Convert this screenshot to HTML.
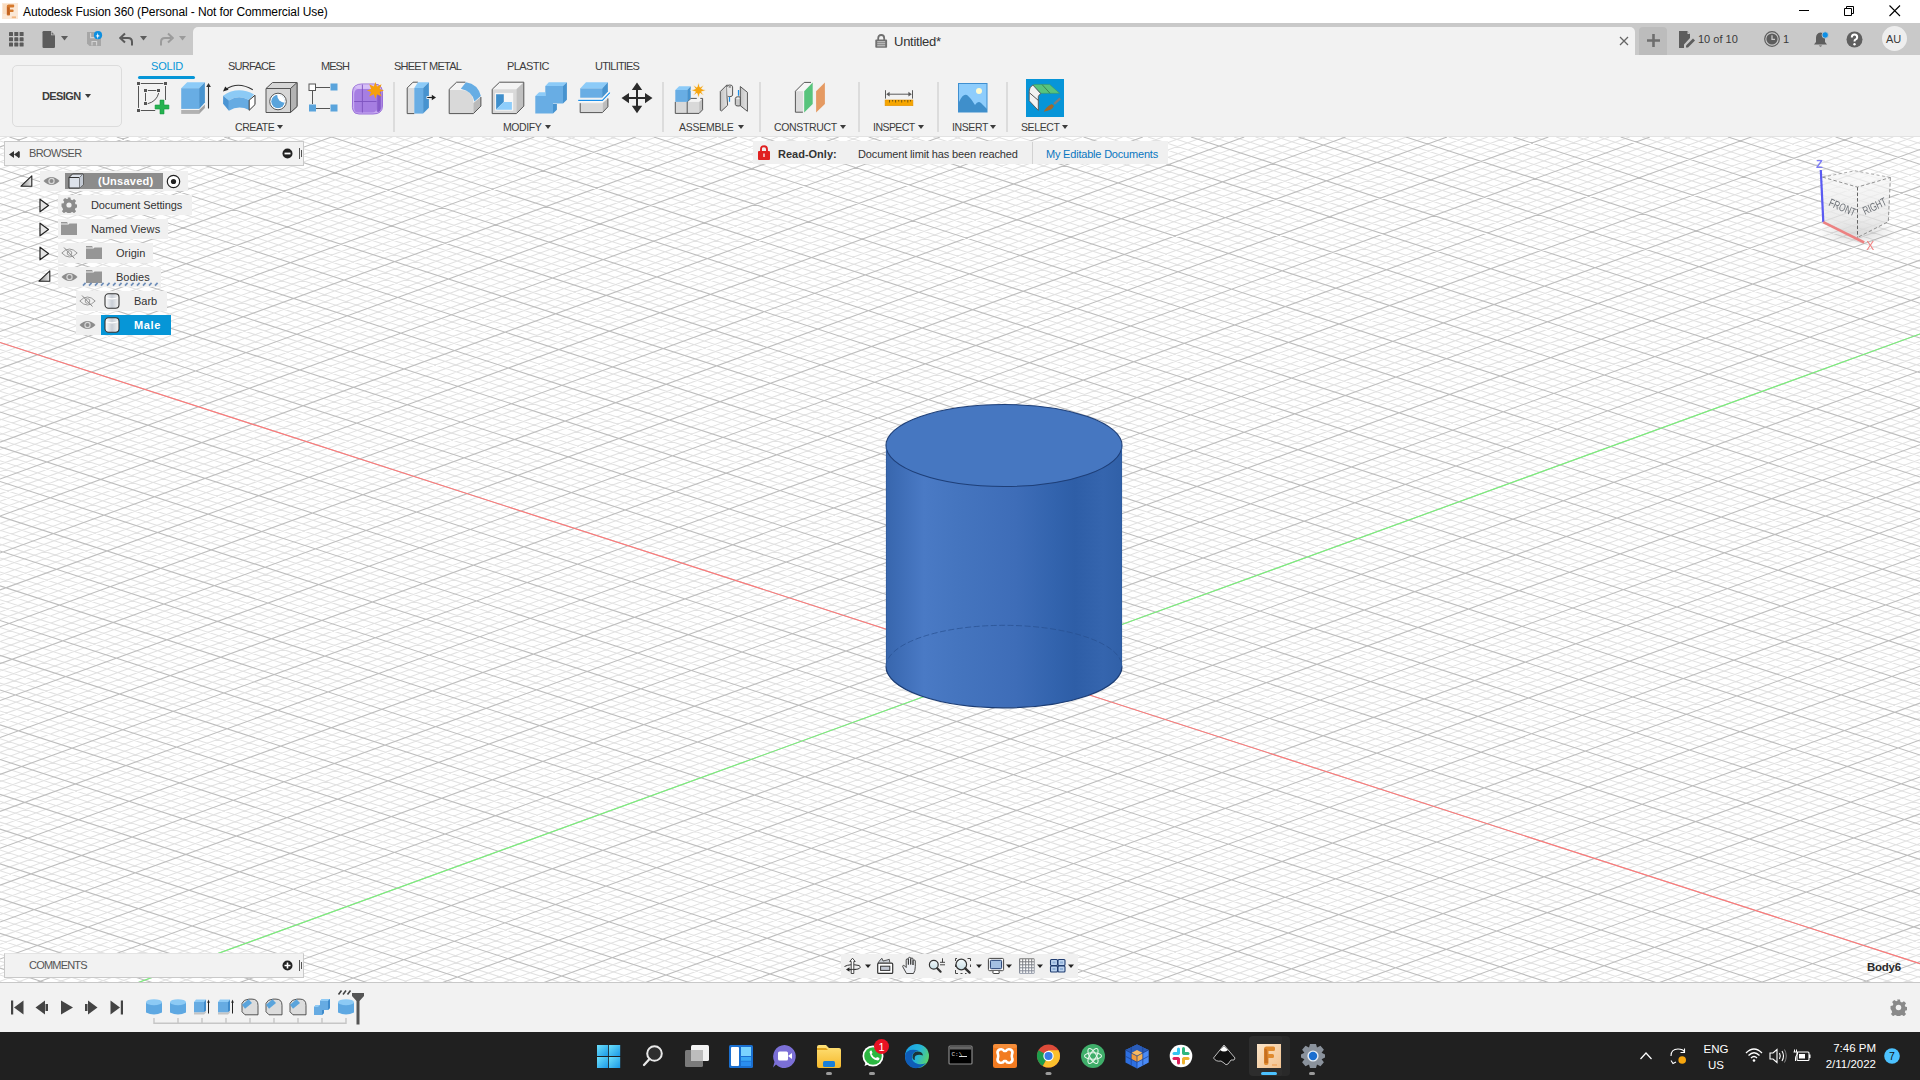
<!DOCTYPE html>
<html><head><meta charset="utf-8">
<style>
*{box-sizing:border-box;margin:0;padding:0}
html,body{width:1920px;height:1080px;overflow:hidden;background:#fff;font-family:"Liberation Sans",sans-serif;color:#3c3c3c}
.a{position:absolute}
#title{left:0;top:0;width:1920px;height:23px;background:#fff}
#tabbar{left:0;top:23px;width:1920px;height:32px;background:#c9c9c9}
#toolbar{left:0;top:55px;width:1920px;height:82px;background:#f2f2f2;border-bottom:1px solid #e3e3e3}
#vp{left:0;top:0;width:1920px;height:1080px}
#timeline{left:0;top:982px;width:1920px;height:50px;background:#f2f2f2}
#taskbar{left:0;top:1032px;width:1920px;height:48px;background:#202020}
.tl{font-size:11px;color:#3c3c3c;white-space:nowrap}
.lbl{font-size:10.5px;color:#3c3c3c;white-space:nowrap}
.sep{width:2px;background:#dcdcdc;top:82px;height:50px}
</style></head><body>
<svg id="vp" class="a" width="1920" height="1080" viewBox="0 0 1920 1080"><path d="M0.0 982.0L3.2 983.0M0.0 975.0L24.7 983.0M0.0 961.1L67.6 983.0M0.0 954.2L89.1 983.0M0.0 947.2L110.6 983.0M0.0 940.3L132.1 983.0M0.0 926.4L175.0 983.0M0.0 919.4L196.5 983.0M0.0 912.5L218.0 983.0M0.0 905.5L239.5 983.0M0.0 891.6L282.5 983.0M0.0 884.7L304.0 983.0M0.0 877.7L325.4 983.0M0.0 870.8L346.9 983.0M0.0 856.9L389.9 983.0M0.0 849.9L411.4 983.0M0.0 843.0L432.9 983.0M0.0 836.0L454.3 983.0M0.0 822.1L497.3 983.0M0.0 815.2L518.8 983.0M0.0 808.2L540.3 983.0M0.0 801.3L561.8 983.0M0.0 787.4L604.7 983.0M0.0 780.4L626.2 983.0M0.0 773.5L647.7 983.0M0.0 766.5L669.2 983.0M0.0 752.6L712.2 983.0M0.0 745.6L733.6 983.0M0.0 738.7L755.1 983.0M0.0 731.7L776.6 983.0M0.0 717.8L819.6 983.0M-0.0 710.9L841.1 983.0M0.0 703.9L862.6 983.0M0.0 697.0L884.0 983.0M0.0 683.1L927.0 983.0M0.0 676.1L948.5 983.0M0.0 669.2L970.0 983.0M0.0 662.2L991.5 983.0M0.0 648.3L1034.4 983.0M0.0 641.4L1055.9 983.0M0.0 634.4L1077.4 983.0M0.0 627.5L1098.9 983.0M0.0 613.6L1141.9 983.0M0.0 606.6L1163.3 983.0M0.0 599.7L1184.8 983.0M0.0 592.7L1206.3 983.0M0.0 578.8L1249.3 983.0M0.0 571.9L1270.8 983.0M0.0 564.9L1292.3 983.0M0.0 558.0L1313.7 983.0M0.0 544.1L1356.7 983.0M0.0 537.1L1378.2 983.0M0.0 530.2L1399.7 983.0M0.0 523.2L1421.2 983.0M0.0 509.3L1464.1 983.0M0.0 502.4L1485.6 983.0M0.0 495.4L1507.1 983.0M0.0 488.5L1528.6 983.0M0.0 474.6L1571.6 983.0M0.0 467.6L1593.0 983.0M0.0 460.7L1614.5 983.0M0.0 453.7L1636.0 983.0M0.0 439.8L1679.0 983.0M0.0 432.9L1700.5 983.0M0.0 425.9L1721.9 983.0M-0.0 419.0L1743.4 983.0M0.0 405.1L1786.4 983.0M0.0 398.1L1807.9 983.0M0.0 391.2L1829.4 983.0M0.0 384.2L1850.9 983.0M-0.0 370.3L1893.8 983.0M-0.0 363.4L1915.3 983.0M0.0 356.4L1920.0 977.6M0.0 349.5L1920.0 970.6M0.0 335.5L1920.0 956.7M0.0 328.6L1920.0 949.8M0.0 321.6L1920.0 942.8M0.0 314.7L1920.0 935.9M0.0 300.8L1920.0 922.0M0.0 293.8L1920.0 915.0M0.0 286.9L1920.0 908.1M0.0 279.9L1920.0 901.1M0.0 266.0L1920.0 887.2M0.0 259.1L1920.0 880.3M0.0 252.1L1920.0 873.3M0.0 245.2L1920.0 866.4M0.0 231.3L1920.0 852.5M0.0 224.3L1920.0 845.5M0.0 217.4L1920.0 838.6M0.0 210.4L1920.0 831.6M0.0 196.5L1920.0 817.7M0.0 189.6L1920.0 810.7M0.0 182.6L1920.0 803.8M0.0 175.7L1920.0 796.8M0.0 161.8L1920.0 782.9M0.0 154.8L1920.0 776.0M0.0 147.9L1920.0 769.0M0.0 140.9L1920.0 762.1M30.8 137.0L1920.0 748.2M52.3 137.0L1920.0 741.2M73.8 137.0L1920.0 734.3M95.3 137.0L1920.0 727.3M138.3 137.0L1920.0 713.4M159.7 137.0L1920.0 706.5M181.2 137.0L1920.0 699.5M202.7 137.0L1920.0 692.6M245.7 137.0L1920.0 678.7M267.2 137.0L1920.0 671.7M288.7 137.0L1920.0 664.8M310.1 137.0L1920.0 657.8M353.1 137.0L1920.0 643.9M374.6 137.0L1920.0 637.0M396.1 137.0L1920.0 630.0M417.6 137.0L1920.0 623.1M460.5 137.0L1920.0 609.2M482.0 137.0L1920.0 602.2M503.5 137.0L1920.0 595.3M525.0 137.0L1920.0 588.3M568.0 137.0L1920.0 574.4M589.4 137.0L1920.0 567.5M610.9 137.0L1920.0 560.5M632.4 137.0L1920.0 553.6M675.4 137.0L1920.0 539.7M696.9 137.0L1920.0 532.7M718.3 137.0L1920.0 525.8M739.8 137.0L1920.0 518.8M782.8 137.0L1920.0 504.9M804.3 137.0L1920.0 498.0M825.8 137.0L1920.0 491.0M847.3 137.0L1920.0 484.1M890.2 137.0L1920.0 470.2M911.7 137.0L1920.0 463.2M933.2 137.0L1920.0 456.3M954.7 137.0L1920.0 449.3M997.6 137.0L1920.0 435.4M1019.1 137.0L1920.0 428.5M1040.6 137.0L1920.0 421.5M1062.1 137.0L1920.0 414.6M1105.1 137.0L1920.0 400.6M1126.6 137.0L1920.0 393.7M1148.0 137.0L1920.0 386.7M1169.5 137.0L1920.0 379.8M1212.5 137.0L1920.0 365.9M1234.0 137.0L1920.0 358.9M1255.5 137.0L1920.0 352.0M1277.0 137.0L1920.0 345.0M1319.9 137.0L1920.0 331.1M1341.4 137.0L1920.0 324.2M1362.9 137.0L1920.0 317.2M1384.4 137.0L1920.0 310.3M1427.3 137.0L1920.0 296.4M1448.8 137.0L1920.0 289.4M1470.3 137.0L1920.0 282.5M1491.8 137.0L1920.0 275.5M1534.8 137.0L1920.0 261.6M1556.3 137.0L1920.0 254.7M1577.7 137.0L1920.0 247.7M1599.2 137.0L1920.0 240.8M1642.2 137.0L1920.0 226.9M1663.7 137.0L1920.0 219.9M1685.2 137.0L1920.0 213.0M1706.6 137.0L1920.0 206.0M1749.6 137.0L1920.0 192.1M1771.1 137.0L1920.0 185.2M1792.6 137.0L1920.0 178.2M1814.1 137.0L1920.0 171.3M1857.0 137.0L1920.0 157.4M1878.5 137.0L1920.0 150.4M1900.0 137.0L1920.0 143.5M0.0 139.5L7.0 137.0M0.0 154.3L47.6 137.0M0.0 161.7L67.8 137.0M0.0 169.1L88.1 137.0M0.0 176.5L108.4 137.0M0.0 191.2L149.0 137.0M0.0 198.6L169.2 137.0M0.0 206.0L189.5 137.0M0.0 213.4L209.8 137.0M0.0 228.1L250.4 137.0M0.0 235.5L270.7 137.0M0.0 242.9L290.9 137.0M0.0 250.3L311.2 137.0M0.0 265.0L351.8 137.0M0.0 272.4L372.1 137.0M0.0 279.8L392.4 137.0M0.0 287.2L412.6 137.0M0.0 302.0L453.2 137.0M0.0 309.3L473.5 137.0M0.0 316.7L493.8 137.0M0.0 324.1L514.0 137.0M0.0 338.9L554.6 137.0M0.0 346.3L574.9 137.0M0.0 353.6L595.2 137.0M0.0 361.0L615.5 137.0M0.0 375.8L656.0 137.0M0.0 383.2L676.3 137.0M0.0 390.6L696.6 137.0M0.0 397.9L716.9 137.0M0.0 412.7L757.4 137.0M0.0 420.1L777.7 137.0M0.0 427.5L798.0 137.0M0.0 434.8L818.3 137.0M0.0 449.6L858.8 137.0M0.0 457.0L879.1 137.0M0.0 464.4L899.4 137.0M0.0 471.8L919.7 137.0M0.0 486.5L960.2 137.0M0.0 493.9L980.5 137.0M0.0 501.3L1000.8 137.0M0.0 508.7L1021.1 137.0M0.0 523.4L1061.7 137.0M0.0 530.8L1081.9 137.0M0.0 538.2L1102.2 137.0M0.0 545.6L1122.5 137.0M0.0 560.4L1163.1 137.0M0.0 567.7L1183.4 137.0M0.0 575.1L1203.6 137.0M0.0 582.5L1223.9 137.0M0.0 597.3L1264.5 137.0M0.0 604.6L1284.8 137.0M0.0 612.0L1305.0 137.0M0.0 619.4L1325.3 137.0M0.0 634.2L1365.9 137.0M-0.0 641.6L1386.2 137.0M-0.0 648.9L1406.5 137.0M0.0 656.3L1426.7 137.0M0.0 671.1L1467.3 137.0M0.0 678.5L1487.6 137.0M0.0 685.9L1507.9 137.0M0.0 693.2L1528.1 137.0M0.0 708.0L1568.7 137.0M0.0 715.4L1589.0 137.0M0.0 722.8L1609.3 137.0M0.0 730.2L1629.6 137.0M0.0 744.9L1670.1 137.0M0.0 752.3L1690.4 137.0M0.0 759.7L1710.7 137.0M0.0 767.1L1731.0 137.0M0.0 781.8L1771.5 137.0M0.0 789.2L1791.8 137.0M0.0 796.6L1812.1 137.0M0.0 804.0L1832.4 137.0M0.0 818.7L1872.9 137.0M0.0 826.1L1893.2 137.0M0.0 833.5L1913.5 137.0M0.0 840.9L1920.0 142.0M0.0 855.7L1920.0 156.8M0.0 863.0L1920.0 164.2M0.0 870.4L1920.0 171.5M0.0 877.8L1920.0 178.9M0.0 892.6L1920.0 193.7M0.0 900.0L1920.0 201.1M-0.0 907.3L1920.0 208.5M-0.0 914.7L1920.0 215.8M0.0 929.5L1920.0 230.6M0.0 936.9L1920.0 238.0M0.0 944.2L1920.0 245.4M0.0 951.6L1920.0 252.8M0.0 966.4L1920.0 267.5M0.0 973.8L1920.0 274.9M0.0 981.2L1920.0 282.3M15.2 983.0L1920.0 289.7M55.8 983.0L1920.0 304.4M76.1 983.0L1920.0 311.8M96.4 983.0L1920.0 319.2M116.6 983.0L1920.0 326.6M157.2 983.0L1920.0 341.3M177.5 983.0L1920.0 348.7M197.8 983.0L1920.0 356.1M218.0 983.0L1920.0 363.5M258.6 983.0L1920.0 378.3M278.9 983.0L1920.0 385.6M299.2 983.0L1920.0 393.0M319.5 983.0L1920.0 400.4M360.0 983.0L1920.0 415.2M380.3 983.0L1920.0 422.6M400.6 983.0L1920.0 429.9M420.9 983.0L1920.0 437.3M461.4 983.0L1920.0 452.1M481.7 983.0L1920.0 459.5M502.0 983.0L1920.0 466.9M522.3 983.0L1920.0 474.2M562.8 983.0L1920.0 489.0M583.1 983.0L1920.0 496.4M603.4 983.0L1920.0 503.8M623.7 983.0L1920.0 511.1M664.3 983.0L1920.0 525.9M684.5 983.0L1920.0 533.3M704.8 983.0L1920.0 540.7M725.1 983.0L1920.0 548.1M765.7 983.0L1920.0 562.8M785.9 983.0L1920.0 570.2M806.2 983.0L1920.0 577.6M826.5 983.0L1920.0 585.0M867.1 983.0L1920.0 599.7M887.4 983.0L1920.0 607.1M907.6 983.0L1920.0 614.5M927.9 983.0L1920.0 621.9M968.5 983.0L1920.0 636.7M988.8 983.0L1920.0 644.0M1009.0 983.0L1920.0 651.4M1029.3 983.0L1920.0 658.8M1069.9 983.0L1920.0 673.6M1090.2 983.0L1920.0 680.9M1110.5 983.0L1920.0 688.3M1130.7 983.0L1920.0 695.7M1171.3 983.0L1920.0 710.5M1191.6 983.0L1920.0 717.9M1211.9 983.0L1920.0 725.2M1232.2 983.0L1920.0 732.6M1272.7 983.0L1920.0 747.4M1293.0 983.0L1920.0 754.8M1313.3 983.0L1920.0 762.2M1333.6 983.0L1920.0 769.5M1374.1 983.0L1920.0 784.3M1394.4 983.0L1920.0 791.7M1414.7 983.0L1920.0 799.1M1435.0 983.0L1920.0 806.5M1475.5 983.0L1920.0 821.2M1495.8 983.0L1920.0 828.6M1516.1 983.0L1920.0 836.0M1536.4 983.0L1920.0 843.4M1576.9 983.0L1920.0 858.1M1597.2 983.0L1920.0 865.5M1617.5 983.0L1920.0 872.9M1637.8 983.0L1920.0 880.3M1678.4 983.0L1920.0 895.0M1698.6 983.0L1920.0 902.4M1718.9 983.0L1920.0 909.8M1739.2 983.0L1920.0 917.2M1779.8 983.0L1920.0 932.0M1800.0 983.0L1920.0 939.3M1820.3 983.0L1920.0 946.7M1840.6 983.0L1920.0 954.1M1881.2 983.0L1920.0 968.9M1901.5 983.0L1920.0 976.3" stroke="#e2e2e2" stroke-width="1.05" fill="none"/><path d="M0.0 968.1L46.1 983.0M0.0 933.3L153.6 983.0M0.0 898.6L261.0 983.0M0.0 863.8L368.4 983.0M0.0 829.1L475.8 983.0M0.0 794.3L583.3 983.0M0.0 759.5L690.7 983.0M0.0 724.8L798.1 983.0M0.0 690.0L905.5 983.0M0.0 655.3L1012.9 983.0M0.0 620.5L1120.4 983.0M0.0 585.8L1227.8 983.0M0.0 551.0L1335.2 983.0M0.0 516.3L1442.6 983.0M0.0 481.5L1550.1 983.0M0.0 446.8L1657.5 983.0M0.0 412.0L1764.9 983.0M0.0 377.3L1872.3 983.0M0.0 342.5L1920.0 963.7M0.0 307.7L1920.0 928.9M0.0 273.0L1920.0 894.2M0.0 238.2L1920.0 859.4M0.0 203.5L1920.0 824.6M0.0 168.7L1920.0 789.9M9.4 137.0L1920.0 755.1M116.8 137.0L1920.0 720.4M224.2 137.0L1920.0 685.6M331.6 137.0L1920.0 650.9M439.0 137.0L1920.0 616.1M546.5 137.0L1920.0 581.4M653.9 137.0L1920.0 546.6M761.3 137.0L1920.0 511.9M868.7 137.0L1920.0 477.1M976.2 137.0L1920.0 442.4M1083.6 137.0L1920.0 407.6M1191.0 137.0L1920.0 372.8M1298.4 137.0L1920.0 338.1M1405.9 137.0L1920.0 303.3M1513.3 137.0L1920.0 268.6M1620.7 137.0L1920.0 233.8M1728.1 137.0L1920.0 199.1M1835.6 137.0L1920.0 164.3M0.0 146.9L27.3 137.0M0.0 183.8L128.7 137.0M0.0 220.8L230.1 137.0M0.0 257.7L331.5 137.0M0.0 294.6L432.9 137.0M0.0 331.5L534.3 137.0M0.0 368.4L635.7 137.0M0.0 405.3L737.1 137.0M0.0 442.2L838.6 137.0M0.0 479.1L940.0 137.0M0.0 516.1L1041.4 137.0M0.0 553.0L1142.8 137.0M0.0 589.9L1244.2 137.0M0.0 626.8L1345.6 137.0M0.0 663.7L1447.0 137.0M0.0 700.6L1548.4 137.0M0.0 737.5L1649.8 137.0M0.0 774.4L1751.2 137.0M0.0 811.4L1852.7 137.0M0.0 848.3L1920.0 149.4M0.0 885.2L1920.0 186.3M-0.0 922.1L1920.0 223.2M-0.0 959.0L1920.0 260.1M35.5 983.0L1920.0 297.1M136.9 983.0L1920.0 334.0M238.3 983.0L1920.0 370.9M339.7 983.0L1920.0 407.8M441.2 983.0L1920.0 444.7M542.6 983.0L1920.0 481.6M644.0 983.0L1920.0 518.5M745.4 983.0L1920.0 555.4M846.8 983.0L1920.0 592.4M948.2 983.0L1920.0 629.3M1049.6 983.0L1920.0 666.2M1151.0 983.0L1920.0 703.1M1252.4 983.0L1920.0 740.0M1353.8 983.0L1920.0 776.9M1455.3 983.0L1920.0 813.8M1556.7 983.0L1920.0 850.7M1658.1 983.0L1920.0 887.7M1759.5 983.0L1920.0 924.6M1860.9 983.0L1920.0 961.5" stroke="#bebebe" stroke-width="1.1" fill="none"/><path d="M0.0 342.5L1920.0 963.7" stroke="#ff7878" stroke-width="1.1" fill="none"/><path d="M136.9 983.0L1920.0 334.0" stroke="#78f078" stroke-width="1.1" fill="none"/></svg>

<div id="title" class="a">
 <svg class="a" style="left:2px;top:3px" width="16" height="16" viewBox="0 0 16 16">
  <rect width="16" height="16" fill="#fbe8d6"/><rect x="1" y="1" width="4" height="10" fill="#f9dcc0"/>
  <path d="M4.8 3.2Q4.8 1.6 6.4 1.6H11.4Q12.2 1.6 12.2 2.6V3.6Q12.2 4.4 11.4 4.4H8V6.6H10.8Q11.6 6.6 11.6 7.4V8.2Q11.6 9 10.8 9H8V11.8Q8 12.6 7.2 12.6H5.8Q4.8 12.6 4.8 11.8z" fill="#d5782c"/>
  <path d="M5.2 11.5V4Q6 3.5 7.2 5L7.8 11.5z" fill="#b4531a" opacity=".6"/>
  <rect x="9.8" y="13.4" width="4.2" height="1.8" fill="#f2b782"/>
 </svg>
 <div class="a" style="left:23px;top:4px;font-size:12px;line-height:16px;color:#000;letter-spacing:-0.1px">Autodesk Fusion 360 (Personal - Not for Commercial Use)</div>
 <div class="a" style="left:1799px;top:10px;width:10px;height:1px;background:#000"></div>
 <svg class="a" style="left:1843px;top:5px" width="12" height="12" viewBox="0 0 12 12"><path d="M1.5 3.5h7v7h-7z M3.5 3.5v-2h7v7h-2" fill="none" stroke="#000" stroke-width="1"/></svg>
 <svg class="a" style="left:1889px;top:5px" width="12" height="12" viewBox="0 0 12 12"><path d="M0.5 0.5L11 11M11 0.5L0.5 11" stroke="#000" stroke-width="1.1"/></svg>
</div>
<div id="tabbar" class="a">
 <svg class="a" style="left:9px;top:9px" width="15" height="15" viewBox="0 0 15 15" fill="#5a5a5a">
  <rect x="0" y="0" width="4" height="4" rx=".6"/><rect x="5.3" y="0" width="4" height="4" rx=".6"/><rect x="10.6" y="0" width="4" height="4" rx=".6"/>
  <rect x="0" y="5.3" width="4" height="4" rx=".6"/><rect x="5.3" y="5.3" width="4" height="4" rx=".6"/><rect x="10.6" y="5.3" width="4" height="4" rx=".6"/>
  <rect x="0" y="10.6" width="4" height="4" rx=".6"/><rect x="5.3" y="10.6" width="4" height="4" rx=".6"/><rect x="10.6" y="10.6" width="4" height="4" rx=".6"/>
 </svg>
 <svg class="a" style="left:42px;top:8px" width="14" height="17" viewBox="0 0 14 17"><path d="M0.5 1.2Q0.5 0 1.7 0H9L13 4.2V15.8Q13 17 11.8 17H1.7Q0.5 17 0.5 15.8z" fill="#5c5c5c"/><path d="M9 0V4.2H13" fill="#c9c9c9"/><path d="M9.6 1.2L12 3.6H9.6z" fill="#5c5c5c"/></svg>
 <svg class="a" style="left:61px;top:13px" width="8" height="5" viewBox="0 0 8 5"><path d="M0 0h7l-3.5 4.5z" fill="#5c5c5c"/></svg>
 <svg class="a" style="left:86px;top:8px" width="17" height="17" viewBox="0 0 17 17"><path d="M1 1H15V15H3.5L1 12.5z" fill="#a6a6a6"/><path d="M4.6 2V6.6H9" fill="none" stroke="#d4d4d4" stroke-width="1.1"/><path d="M6 14.5V10.5H10.6V14.5" fill="none" stroke="#d4d4d4" stroke-width="1.1"/><circle cx="12" cy="4.2" r="4.1" fill="#0d8fe0"/><path d="M11.7 1.8L12.3 4.3L14 5.1L12.3 5.6L11.7 8L11.1 5.6L9.5 5.1L11.1 4.3z" fill="#fff"/></svg>
 <svg class="a" style="left:119px;top:9px" width="15" height="14" viewBox="0 0 15 14"><path d="M13 13.5V10Q13 6 9 6H3" fill="none" stroke="#5a5a5a" stroke-width="2"/><path d="M6 1.5L1.2 6L6 10.5" fill="none" stroke="#5a5a5a" stroke-width="2"/></svg>
 <svg class="a" style="left:140px;top:13px" width="8" height="5" viewBox="0 0 8 5"><path d="M0 0h7l-3.5 4.5z" fill="#5c5c5c"/></svg>
 <svg class="a" style="left:159px;top:9px" width="15" height="14" viewBox="0 0 15 14"><path d="M2 13.5V10Q2 6 6 6H12" fill="none" stroke="#9b9b9b" stroke-width="2"/><path d="M9 1.5L13.8 6L9 10.5" fill="none" stroke="#9b9b9b" stroke-width="2"/></svg>
 <svg class="a" style="left:179px;top:13px" width="8" height="5" viewBox="0 0 8 5"><path d="M0 0h7l-3.5 4.5z" fill="#9b9b9b"/></svg>
 <div class="a" style="left:193px;top:4px;width:1442px;height:28px;background:#f2f2f2;border-radius:5px 5px 0 0"></div>
 <svg class="a" style="left:875px;top:11px" width="13" height="14" viewBox="0 0 13 14"><path d="M3.2 6.5V4.2Q3.2 1 6.2 1T9.2 4.2V6.5" fill="none" stroke="#707070" stroke-width="1.8"/><rect x="0.3" y="5.6" width="11.8" height="8.2" rx="0.8" fill="#707070"/><path d="M2.2 7.8h8M2.2 9.8h8M2.2 11.8h8" stroke="#f0f0f0" stroke-width="0.8"/></svg>
 <div class="a" style="left:894px;top:11px;font-size:13px;line-height:16px;color:#333;letter-spacing:-0.25px">Untitled*</div>
 <svg class="a" style="left:1619px;top:13px" width="10" height="10" viewBox="0 0 10 10"><path d="M1 1L9 9M9 1L1 9" stroke="#666" stroke-width="1.3"/></svg>
 <div class="a" style="left:1639px;top:4px;width:28px;height:28px;background:#bcbcbc;border-radius:4px 4px 0 0"></div>
 <svg class="a" style="left:1647px;top:11px" width="13" height="13" viewBox="0 0 13 13"><path d="M6.5 0V13M0 6.5H13" stroke="#6e6e6e" stroke-width="2.6"/></svg>
 <svg class="a" style="left:1679px;top:8px" width="16" height="17" viewBox="0 0 16 17"><path d="M0 0H8.5L11 3V7L5 13.5V17H0z" fill="#5d5d5d"/><path d="M7 14.5L14 7.5L16 9.5L9 16.5H7z" fill="#5d5d5d"/><path d="M8.5 0V3H11" fill="#c9c9c9"/></svg>
 <div class="a" style="left:1698px;top:9px;font-size:11px;line-height:14px;color:#3a3a3a">10 of 10</div>
 <svg class="a" style="left:1764px;top:8px" width="16" height="16" viewBox="0 0 16 16"><circle cx="8" cy="8" r="7.3" fill="none" stroke="#5d5d5d" stroke-width="1.2"/><circle cx="8" cy="8" r="5.6" fill="#5d5d5d"/><path d="M8 4.2V8.3H11" fill="none" stroke="#c9c9c9" stroke-width="1.3"/></svg>
 <div class="a" style="left:1783px;top:9px;font-size:11px;line-height:14px;color:#3a3a3a">1</div>
 <svg class="a" style="left:1813px;top:8px" width="16" height="17" viewBox="0 0 16 17"><path d="M7.5 1.5Q3 2 3 7V11L1 13.5H14L12 11V7Q12 2 7.5 1.5z" fill="#5d5d5d"/><path d="M5.8 14.5Q7.5 16.8 9.2 14.5z" fill="#5d5d5d"/><circle cx="12.2" cy="4" r="3.2" fill="#0c8fe6" stroke="#c9c9c9" stroke-width="0.8"/></svg>
 <svg class="a" style="left:1846px;top:8px" width="17" height="17" viewBox="0 0 17 17"><circle cx="8.5" cy="8.5" r="8" fill="#5f5f5f"/><path d="M5.8 6.4Q5.8 3.6 8.5 3.6T11.2 6.2Q11.2 7.8 9.4 8.7Q8.5 9.2 8.5 10.4" fill="none" stroke="#fff" stroke-width="2"/><circle cx="8.5" cy="13.2" r="1.2" fill="#fff"/></svg>
 <div class="a" style="left:1882px;top:3px;width:25px;height:25px;border-radius:50%;background:#eeeeee"></div>
 <div class="a" style="left:1886px;top:8.5px;font-size:11px;line-height:14px;color:#3a3a3a">AU</div>
</div>
<div id="toolbar" class="a"></div>
<div class="a" style="left:11.5px;top:65px;width:110px;height:62px;border:1.5px solid #dcdcdc;border-radius:5px;background:#f2f2f2"></div>
<div class="a" style="left:42px;top:89px;font-size:11px;line-height:14px;font-weight:bold;color:#3c3c3c;letter-spacing:-0.6px">DESIGN</div>
<svg class="a" style="left:85px;top:94px" width="6" height="4" viewBox="0 0 6 4"><path d="M0 0h6L3 4z" fill="#3c3c3c"/></svg>
<div class="a tl" style="left:151px;top:60px;color:#0696d7;letter-spacing:-0.2px">SOLID</div>
<div class="a tl" style="left:228px;top:60px;letter-spacing:-0.72px">SURFACE</div>
<div class="a tl" style="left:321px;top:60px;letter-spacing:-0.95px">MESH</div>
<div class="a tl" style="left:394px;top:60px;letter-spacing:-0.75px">SHEET METAL</div>
<div class="a tl" style="left:507px;top:60px;letter-spacing:-0.58px">PLASTIC</div>
<div class="a tl" style="left:595px;top:60px;letter-spacing:-0.8px">UTILITIES</div>
<div class="a" style="left:138px;top:76px;width:57px;height:3px;background:#0696d7;border-radius:1.5px"></div>
<div class="a sep" style="left:393px"></div>
<div class="a sep" style="left:662px"></div>
<div class="a sep" style="left:759px"></div>
<div class="a sep" style="left:858px"></div>
<div class="a sep" style="left:937px"></div>
<div class="a sep" style="left:1006px"></div>
<div class="a lbl" style="left:235px;top:121px;letter-spacing:-0.42px">CREATE</div><svg class="a" style="left:277px;top:125px" width="6" height="4"><path d="M0 0h6L3 4z" fill="#3c3c3c"/></svg>
<div class="a lbl" style="left:503px;top:121px;letter-spacing:-0.4px">MODIFY</div><svg class="a" style="left:545px;top:125px" width="6" height="4"><path d="M0 0h6L3 4z" fill="#3c3c3c"/></svg>
<div class="a lbl" style="left:679px;top:121px;letter-spacing:-0.26px">ASSEMBLE</div><svg class="a" style="left:738px;top:125px" width="6" height="4"><path d="M0 0h6L3 4z" fill="#3c3c3c"/></svg>
<div class="a lbl" style="left:774px;top:121px;letter-spacing:-0.35px">CONSTRUCT</div><svg class="a" style="left:840px;top:125px" width="6" height="4"><path d="M0 0h6L3 4z" fill="#3c3c3c"/></svg>
<div class="a lbl" style="left:873px;top:121px;letter-spacing:-0.54px">INSPECT</div><svg class="a" style="left:918px;top:125px" width="6" height="4"><path d="M0 0h6L3 4z" fill="#3c3c3c"/></svg>
<div class="a lbl" style="left:952px;top:121px;letter-spacing:-0.38px">INSERT</div><svg class="a" style="left:990px;top:125px" width="6" height="4"><path d="M0 0h6L3 4z" fill="#3c3c3c"/></svg>
<div class="a lbl" style="left:1021px;top:121px;letter-spacing:-0.38px">SELECT</div><svg class="a" style="left:1062px;top:125px" width="6" height="4"><path d="M0 0h6L3 4z" fill="#3c3c3c"/></svg>
<!-- sketch -->
<svg class="a" style="left:136px;top:81px" width="34" height="34" viewBox="0 0 34 34">
 <g fill="#555"><rect x="1" y="1" width="3" height="3"/><rect x="28" y="1" width="3" height="3"/><rect x="1" y="28" width="3" height="3"/>
 <rect x="8" y="8" width="3" height="3"/><rect x="21" y="8" width="3" height="3"/><rect x="8" y="21" width="3" height="3"/></g>
 <path d="M5.2 2.5H26.9M2.5 5.4V26.5M29.5 5.4V18.6M5.2 29.5H18.8M12.3 9.5H19.8M9.5 12.3V19.7" stroke="#555" stroke-width="1" stroke-linecap="round"/>
 <path d="M12.1 22.6Q20.5 20.5 22.6 12.4" fill="none" stroke="#555" stroke-width="1" stroke-linecap="round"/>
 <path d="M24 19.1H28V24H32.9V28H28V32.9H24V28H19.1V24H24z" fill="#26b350" stroke="#10983c" stroke-width="0.6"/>
</svg>
<!-- extrude -->
<svg class="a" style="left:180px;top:81px" width="34" height="34" viewBox="0 0 34 34">
 <path d="M1.2 29H19.1V32.9H1.2z" fill="#b2b2b2"/><path d="M19.1 29L24.9 23.4V26.9L19.1 32.9z" fill="#a2a2a2"/>
 <path d="M1.2 7.2L7.2 1.2H24.9L19.1 7.2z" fill="#8ccbf8"/><path d="M1.2 7.2H19.1V27.9H1.2z" fill="#68ade4"/><path d="M19.1 7.2L24.9 1.2V21.6L19.1 27.9z" fill="#4793cf"/>
 <path d="M28.5 26.9V4.5" stroke="#333" stroke-width="1.1" stroke-linecap="round"/><path d="M26.2 6L28.5 1.9L30.9 6z" fill="#333"/>
</svg>
<!-- revolve -->
<svg class="a" style="left:222px;top:81px" width="34" height="34" viewBox="0 0 34 34">
 <path d="M4 8.3Q16 0 30.8 8.8" fill="none" stroke="#333" stroke-width="1.1"/><path d="M1 10.5L3.2 5.6L6.6 8.8z" fill="#222"/>
 <path d="M1.1 14.7Q15.7 4.5 32.1 13.4L27 19.1Q16.6 13.2 6.9 19.6z" fill="#8ccaf5"/>
 <path d="M6.9 19.6Q16.6 13.2 27 19.1V28.9Q16.6 23.5 6.9 29.8z" fill="#66abe2"/>
 <path d="M1.1 14.7L6.9 19.6V29.8L1.1 22.7z" fill="#4a95d4"/>
 <path d="M27.2 19.1L33 14.3V23.6L27.2 29.3z" fill="#fff" stroke="#333" stroke-width="1"/>
</svg>
<!-- hole -->
<svg class="a" style="left:265px;top:81px" width="34" height="34" viewBox="0 0 34 34">
 <path d="M1 7.5L7.5 1.5H32V25.5L25.5 31.5H1z" fill="#d6d6d6" stroke="#555" stroke-width="1"/>
 <path d="M25.5 7.5L32 1.5V25.5L25.5 31.5z" fill="#b3b3b3" stroke="#555" stroke-width="1"/><path d="M1 7.5H25.5V31.5" fill="none" stroke="#555" stroke-width="1"/>
 <circle cx="13" cy="20.5" r="8.3" fill="#fff" stroke="#555" stroke-width="1"/>
 <clipPath id="hc"><circle cx="13" cy="20.5" r="6.8"/></clipPath>
 <g clip-path="url(#hc)"><circle cx="13" cy="20.5" r="7" fill="#5aa4dc"/><circle cx="19.5" cy="14.5" r="7.2" fill="#fff"/></g>
</svg>
<!-- pattern -->
<svg class="a" style="left:308px;top:81px" width="32" height="34" viewBox="0 0 32 34">
 <path d="M8 6.5H22M4.5 10V23M8 27.5H22" stroke="#555" stroke-width="1"/>
 <rect x="1" y="3" width="6.5" height="6.5" fill="#fff" stroke="#555" stroke-width="1"/>
 <rect x="22.5" y="2.5" width="7" height="7" fill="#5aa4dc"/><rect x="1" y="23.5" width="7" height="7" fill="#5aa4dc"/><rect x="22.5" y="23.5" width="7" height="7" fill="#5aa4dc"/>
</svg>
<!-- form -->
<svg class="a" style="left:350px;top:81px" width="34" height="34" viewBox="0 0 34 34">
 <path d="M2.5 12Q2.5 6 6 4.5Q8 3 12 3H24Q29 3 31 6Q32.5 8 32.5 13V25Q32.5 29 30 31Q28 33 23 33H9Q4 33 3 29Q2 27 2.5 22z" fill="#c9aef2" stroke="#9a70d8" stroke-width="1"/>
 <path d="M4.2 13Q4.5 8.5 8 8H22Q26 8 26.5 12V27Q26.5 31.5 22 31.5H8Q4.2 31.5 4.2 27z" fill="#a67ee2"/>
 <path d="M26.5 12Q27 9 30 8Q31.5 10 31.5 14V25Q31.5 29 28.5 31Q26.5 31.5 26.5 29z" fill="#8d62cf"/>
 <path d="M5 5.5Q8 3.5 12 3.5H24Q27.5 3.5 29.5 6Q27 7.5 24 7.8H8Q5.5 7.8 5 5.5z" fill="#d6bff7"/>
 <path d="M12.4 8V31.5M4.2 20.5H26.5M12.4 3.5V8M29 9V30" stroke="#7d52bf" stroke-width="0.9" fill="none"/>
 <path d="M25.4 1L27 5.6L31.6 3.2L29.6 7.9L34 9.4L29.6 10.9L31.6 15.6L27 13.2L25.4 17.8L23.8 13.2L19.2 15.6L21.2 10.9L16.8 9.4L21.2 7.9L19.2 3.2L23.8 5.6z" fill="#f5a00c"/>
</svg>
<!-- press pull -->
<svg class="a" style="left:406px;top:81px" width="34" height="34" viewBox="0 0 34 34">
 <path d="M1.2 7L7 1.2H11.9L8.3 7z" fill="#f6f6f6"/><path d="M1.2 7H8.3V32.6H1.2z" fill="#dcdcdc"/>
 <path d="M8.3 32.6H1.2V7L7 1.2H11.9" fill="none" stroke="#555" stroke-width="1"/>
 <path d="M8.3 7L11.9 1.2H22.9L17.1 7z" fill="#8ccbf8"/><path d="M8.3 7H17.1V32.6H8.3z" fill="#68ade4"/><path d="M17.1 7L22.9 1.2V26.7L17.1 32.6z" fill="#4793cf"/>
 <rect x="20.6" y="15" width="3" height="3" fill="#fff"/>
 <path d="M21.2 16.5H27" stroke="#222" stroke-width="1.2"/><path d="M25.8 13.8L30 16.5L25.8 19.2z" fill="#222"/>
</svg>
<!-- fillet -->
<svg class="a" style="left:448px;top:81px" width="34" height="34" viewBox="0 0 34 34">
 <path d="M1.2 8.3L8.6 1.2H18Q30 3 32.9 15.1V25.1L25.4 32.6H1.2z" fill="#f4f4f4"/>
 <path d="M1.2 9H12.8Q25.4 9.5 25.4 21.9V32.6H1.2z" fill="#d9d9d9"/>
 <path d="M25.4 21.9L32.9 16.1V25.1L25.4 32.6z" fill="#b9b9b9"/>
 <path d="M18 1.2Q30 3 32.9 15.1L26.4 20.6Q24.5 10 12.8 7.7z" fill="#66ade4"/>
 <path d="M25.4 32.6H1.2V8.3L8.6 1.2H17.4M32.9 16V25.1L25.4 32.6" fill="none" stroke="#555" stroke-width="1"/>
</svg>
<!-- shell -->
<svg class="a" style="left:491px;top:81px" width="34" height="34" viewBox="0 0 34 34">
 <path d="M1.2 8.3L8.6 1.2H32.8L25.4 8.3z" fill="#f4f4f4"/><path d="M1.2 8.3H25.4V32.6H1.2z" fill="#d9d9d9"/><path d="M25.4 8.3L32.8 1.2V25.1L25.4 32.6z" fill="#c0c0c0"/>
 <path d="M1.2 32.6V8.3L8.6 1.2H32.8V25.1L25.4 32.6z" fill="none" stroke="#555" stroke-width="1"/>
 <rect x="4.1" y="11.9" width="18.1" height="17.8" fill="#f6f6f6"/>
 <path d="M5.1 13.2H12.8V20.9L5.1 28.4z" fill="#3f8fcc"/><path d="M5.1 28.4L12.8 20.9H20.9V28.7H5.1z" fill="#8ecdfb"/>
</svg>
<!-- combine -->
<svg class="a" style="left:534px;top:81px" width="34" height="34" viewBox="0 0 34 34">
 <path d="M1.3 15.1H11.3V5.1H29V22.5H19V32.6H1.3z" fill="#68ade4"/>
 <path d="M1.3 15.1L5.1 11.2H11.3V15.1z M11.3 5.1L14.8 1.2H32.9L29 5.1z" fill="#8ccbf8"/>
 <path d="M29 5.1L32.9 1.2V18.7L29 22.5z M19 22.9H22.9V28.7L19 32.6z" fill="#4793cf"/>
</svg>
<!-- split -->
<svg class="a" style="left:577px;top:81px" width="34" height="34" viewBox="0 0 34 34">
 <path d="M3.2 7.4L9 1.2H30.9L25.1 7.4z" fill="#8ccbf8"/><path d="M3.2 7.4H25.1V16.7H3.2z" fill="#68ade4"/><path d="M25.1 7.4L30.9 1.2V10.6L25.1 16.7z" fill="#4793cf"/>
 <path d="M25.4 22.2L30.9 17.4V25.8L25.4 31.6z" fill="#bdbdbd"/><path d="M3.2 22.2H25.4V31.6H3.2z" fill="#d9d9d9"/>
 <path d="M3.2 22.2V31.6H25.4L30.9 25.8V17.4" fill="none" stroke="#555" stroke-width="1"/>
 <path d="M1.2 19.3H25.4L32.9 11.6" fill="none" stroke="#fff" stroke-width="2.6"/>
 <path d="M1.2 19.3H25.4L32.9 11.6" fill="none" stroke="#1a8ee8" stroke-width="1.2"/>
</svg>
<!-- move -->
<svg class="a" style="left:620px;top:81px" width="34" height="34" viewBox="0 0 34 34">
 <path d="M17 8V26M8 17.1H26" stroke="#2b2b2b" stroke-width="2"/>
 <path d="M17 1.6L22.2 9H11.8z M17 32.2L22.2 24.8H11.8z M1.5 17.1L9 11.9V22.3z M32.5 17.1L25 11.9V22.3z" fill="#2b2b2b"/>
</svg>
<!-- new component -->
<svg class="a" style="left:674px;top:81px" width="34" height="34" viewBox="0 0 34 34">
 <path d="M13.2 20.9L17 17.4H28.6L25.1 20.9z" fill="#f4f4f4"/>
 <path d="M1.3 20.9H25.1V32.4H1.3z" fill="#d9d9d9"/><path d="M25.1 20.9L28.6 17.4V28.8L25.1 32.4z" fill="#c2c2c2"/>
 <path d="M1.3 20.9V32.4H25.1L28.6 28.8V17.4H26.3M22.8 17.4H17L13.2 20.9M13.2 20.9V32.4" fill="none" stroke="#555" stroke-width="1"/>
 <path d="M1.3 9L5.1 5.3H16.75L13.2 9z" fill="#8ccbf8"/><path d="M1.3 9H13.2V20.9H1.3z" fill="#68ade4"/><path d="M13.2 9L16.75 5.3V17L13.2 20.9z" fill="#4793cf"/>
 <path d="M24.5 1.3L26 6.2L30.1 3.65L27.55 7.75L32.4 9.25L27.55 10.75L30.1 14.85L26 12.3L24.5 17.2L23 12.3L18.9 14.85L21.45 10.75L16.6 9.25L21.45 7.75L18.9 3.65L23 6.2z" fill="#f6a50e" stroke="#f2f2f2" stroke-width="0.8"/>
</svg>
<!-- joint -->
<svg class="a" style="left:719px;top:82px" width="32" height="34" viewBox="0 0 32 34">
 <defs><linearGradient id="jg" x1="0" y1="0" x2="1" y2="0"><stop offset="0" stop-color="#c4c4c4"/><stop offset="1" stop-color="#e4e4e4"/></linearGradient></defs>
 <path d="M1.3 9.5L8 2.8V14.5L8.6 23.25L2.6 28.9L1.3 28.25z" fill="url(#jg)" stroke="#555" stroke-width="1" stroke-linejoin="round"/>
 <path d="M8 4.8Q8 3 10.8 3T13.6 4.8V13Q13.6 14.6 10.8 14.6Q9.6 14.6 8.6 14.2" fill="#e6e6e6" stroke="#555" stroke-width="1"/>
 <ellipse cx="10.8" cy="4.9" rx="1.3" ry="0.6" fill="#666"/>
 <path d="M21.3 4.5L28.4 10.3V29.3L21.3 23.7z" fill="url(#jg)" stroke="#555" stroke-width="1" stroke-linejoin="round"/>
 <path d="M16.3 16.4Q16.3 14.8 19 14.8Q20.5 14.8 21.3 15.2V23.7Q20 24 19 24Q16.3 24 16.3 22.4z" fill="#cacaca" stroke="#555" stroke-width="1"/>
 <ellipse cx="19" cy="16.4" rx="1.6" ry="0.8" fill="#f0f0f0"/>
 <path d="M10.5 15V19.7M19.5 8V13.7" stroke="#1a8ee8" stroke-width="1.2"/>
</svg>
<!-- construct -->
<svg class="a" style="left:794px;top:81px" width="34" height="34" viewBox="0 0 34 34">
 <path d="M1.4 10.2L10.2 1.4H18.7L10.2 10.2z" fill="#f6f6f6"/>
 <rect x="1.9" y="10.2" width="7" height="20.6" fill="#dcdcdc"/>
 <path d="M8.9 31.2H1.4V10.2L10.2 1.4H17" fill="none" stroke="#555" stroke-width="1"/>
 <path d="M10.2 10.2L18.7 1.4V23L10.2 31.5z" fill="#58c47c"/>
 <path d="M22.1 10.2L30.9 1.4V23L22.1 31.5z" fill="#e59a62"/>
</svg>
<!-- inspect -->
<svg class="a" style="left:883px;top:89px" width="32" height="19" viewBox="0 0 32 19">
 <path d="M2.5 1.2V9.6M29.5 1.2V9.6" stroke="#5a5a5a" stroke-width="1"/>
 <path d="M5 5.2H27" stroke="#5a5a5a" stroke-width="1"/>
 <path d="M3.2 5.2L6.6 2.8V7.6z M28.8 5.2L25.4 2.8V7.6z" fill="#5a5a5a"/>
 <rect x="2.1" y="11" width="27.8" height="5.7" fill="#f6a600" stroke="#e39200" stroke-width="0.6"/>
 <path d="M6.5 11V13.5M9.6 11V12.5M12.6 11V13.5M15.7 11V12.5M18.7 11V13.5M21.8 11V12.5M24.8 11V13.5M27.5 11V12.5" stroke="#6a5010" stroke-width="0.9"/>
</svg>
<!-- insert -->
<svg class="a" style="left:958px;top:83px" width="30" height="30" viewBox="0 0 30 30">
 <rect x="0.5" y="0.5" width="28.5" height="28.5" fill="#8ecdfc" stroke="#3f8fd0" stroke-width="1"/>
 <path d="M1 19Q5 10 9 12Q12 14 17 22Q20 17 23 20L29 26V29H1z" fill="#3f8fcb"/>
 <circle cx="21" cy="8" r="3" fill="#fffbd0"/>
</svg>
<!-- select -->
<svg class="a" style="left:1026px;top:79px" width="38" height="38" viewBox="0 0 38 38">
 <rect width="38" height="38" fill="#0795d8"/>
 <path d="M6.9 6Q8 5.4 10 5.4H23.6L33.6 14.3H14.8z" fill="#58c47d" stroke="#3f9a5c" stroke-width="0.6"/>
 <path d="M16.1 5.6L24 14.3" stroke="#3a7a50" stroke-width="0.9"/>
 <path d="M6.9 6Q3.2 8 3.2 12V21.8L12.3 31.4V17.7Q12.8 15.6 14.8 14.75z" fill="#f2f2f2" stroke="#555" stroke-width="0.9" stroke-linejoin="round"/>
 <path d="M3.6 13.9L12.3 21.4" stroke="#444" stroke-width="0.9"/>
 <path d="M28.2 24.8L34.2 19.3" stroke="#7d7d7d" stroke-width="2.4"/>
 <path d="M17.7 32.7Q20 28 25.2 25.2Q27.5 25 27.9 27.3Q26 31.5 17.7 32.7z" fill="#a2682a"/>
</svg>
<!-- browser -->
<div class="a" style="left:4px;top:141px;width:300px;height:25px;background:#f2f2f2;border:1px solid #c9c9c9"></div>
<svg class="a" style="left:9px;top:151px" width="11" height="7" viewBox="0 0 11 7"><path d="M0 3.5L5 0V7z M5 3.5L10 0V7z" fill="#333"/><rect x="9" y="0.5" width="1.8" height="6" fill="#333"/></svg>
<div class="a tl" style="left:29px;top:147px;color:#555;letter-spacing:-0.6px">BROWSER</div>
<svg class="a" style="left:282px;top:148px" width="11" height="11" viewBox="0 0 11 11"><circle cx="5.5" cy="5.5" r="5" fill="#222"/><rect x="2.5" y="4.6" width="6" height="1.8" fill="#fff"/></svg>
<div class="a" style="left:299px;top:148px;width:1px;height:11px;background:#555"></div><div class="a" style="left:301px;top:150px;width:1px;height:7px;background:#555"></div>

<div class="a" style="left:40px;top:171px;width:148px;height:20px;background:#f0f0f0"></div>
<div class="a" style="left:65px;top:173px;width:98px;height:16px;background:#8c8c8c"></div>
<svg class="a" style="left:20px;top:175px" width="13" height="12" viewBox="0 0 13 12"><defs><linearGradient id="tg" x1="0" y1="0" x2="1" y2="0"><stop offset="0" stop-color="#888"/><stop offset="1" stop-color="#eee"/></linearGradient></defs><path d="M1 11.2L11.8 0.8V11.2z" fill="url(#tg)" stroke="#222" stroke-width="1.1" stroke-linejoin="round"/></svg>
<svg class="a" style="left:43px;top:176px" width="17" height="10" viewBox="0 0 17 10"><path d="M0.5 5Q8.5 -3 16.5 5Q8.5 13 0.5 5z" fill="#8c8c8c"/><circle cx="8.5" cy="5" r="2.6" fill="none" stroke="#d8d8d8" stroke-width="1.2"/></svg>
<svg class="a" style="left:68px;top:173px" width="16" height="16" viewBox="0 0 16 16"><path d="M1 4.5L4.5 1H15V11.5L11.5 15H1z" fill="#dde2ea" stroke="#333" stroke-width="1"/><path d="M1 4.5H11.5V15M11.5 4.5L15 1" fill="none" stroke="#333" stroke-width="1"/><path d="M11.5 4.5L15 1V11.5L11.5 15z" fill="#c4cad4"/></svg>
<div class="a" style="left:98px;top:174px;font-size:11px;line-height:14px;font-weight:bold;color:#fff;letter-spacing:0.25px">(Unsaved)</div>
<svg class="a" style="left:166px;top:174px" width="15" height="15" viewBox="0 0 15 15"><circle cx="7.5" cy="7.5" r="6.2" fill="#fff" stroke="#222" stroke-width="1.2"/><circle cx="7.5" cy="7.5" r="2.6" fill="#222"/></svg>

<div class="a" style="left:58px;top:195px;width:134px;height:20px;background:#f0f0f0"></div>
<svg class="a" style="left:39px;top:198px" width="11" height="15" viewBox="0 0 11 15"><path d="M1 1.2L9.5 7.5L1 13.8z" fill="#e6e6e6" stroke="#222" stroke-width="1.2" stroke-linejoin="round"/></svg>
<svg class="a" style="left:61px;top:197px" width="16" height="16" viewBox="0 0 16 16"><path d="M6.6 0.5h2.8l.4 2.1 1.5.6 1.8-1.2 2 2-1.2 1.8.6 1.5 2.1.4v2.8l-2.1.4-.6 1.5 1.2 1.8-2 2-1.8-1.2-1.5.6-.4 2.1H6.6l-.4-2.1-1.5-.6-1.8 1.2-2-2 1.2-1.8-.6-1.5L.5 9.4V6.6l2.1-.4.6-1.5L2 2.9l2-2 1.8 1.2 1.5-.6z" fill="#8c8c8c"/><circle cx="8" cy="8" r="2.6" fill="#f0f0f0"/></svg>
<div class="a" style="left:91px;top:198px;font-size:11px;line-height:14px;color:#333;letter-spacing:-0.11px">Document Settings</div>

<div class="a" style="left:58px;top:219px;width:110px;height:20px;background:#f0f0f0"></div>
<svg class="a" style="left:39px;top:222px" width="11" height="15" viewBox="0 0 11 15"><path d="M1 1.2L9.5 7.5L1 13.8z" fill="#e6e6e6" stroke="#222" stroke-width="1.2" stroke-linejoin="round"/></svg>
<svg class="a" style="left:61px;top:222px" width="16" height="13" viewBox="0 0 16 13"><path d="M0 0H6L7 1.5H0z" fill="#969696"/><path d="M0 2.5H7.5L8.5 1.5H16V13H0z" fill="#969696"/></svg>
<div class="a" style="left:91px;top:222px;font-size:11px;line-height:14px;color:#333;letter-spacing:0.15px">Named Views</div>

<div class="a" style="left:58px;top:243px;width:95px;height:20px;background:#f0f0f0"></div>
<svg class="a" style="left:39px;top:246px" width="11" height="15" viewBox="0 0 11 15"><path d="M1 1.2L9.5 7.5L1 13.8z" fill="#e6e6e6" stroke="#222" stroke-width="1.2" stroke-linejoin="round"/></svg>
<svg class="a" style="left:61px;top:247px" width="17" height="12" viewBox="0 0 17 12"><path d="M0.8 6Q8.5 -2 16.2 6Q8.5 14 0.8 6z" fill="none" stroke="#999" stroke-width="1"/><circle cx="8.5" cy="6" r="2.3" fill="none" stroke="#999" stroke-width="1"/><path d="M3 0.5L13.5 11.5" stroke="#888" stroke-width="1"/></svg>
<svg class="a" style="left:86px;top:246px" width="16" height="13" viewBox="0 0 16 13"><path d="M0 0H6L7 1.5H0z" fill="#969696"/><path d="M0 2.5H7.5L8.5 1.5H16V13H0z" fill="#969696"/></svg>
<div class="a" style="left:116px;top:246px;font-size:11px;line-height:14px;color:#333">Origin</div>

<div class="a" style="left:58px;top:267px;width:103px;height:20px;background:#f0f0f0"></div>
<svg class="a" style="left:38px;top:270px" width="13" height="12" viewBox="0 0 13 12"><path d="M1 11.2L11.8 0.8V11.2z" fill="url(#tg)" stroke="#222" stroke-width="1.1" stroke-linejoin="round"/></svg>
<svg class="a" style="left:61px;top:272px" width="17" height="10" viewBox="0 0 17 10"><path d="M0.5 5Q8.5 -3 16.5 5Q8.5 13 0.5 5z" fill="#8c8c8c"/><circle cx="8.5" cy="5" r="2.6" fill="none" stroke="#d8d8d8" stroke-width="1.2"/></svg>
<svg class="a" style="left:86px;top:270px" width="16" height="13" viewBox="0 0 16 13"><path d="M0 0H6L7 1.5H0z" fill="#969696"/><path d="M0 2.5H7.5L8.5 1.5H16V13H0z" fill="#969696"/></svg>
<div class="a" style="left:116px;top:270px;font-size:11px;line-height:14px;color:#333">Bodies</div>
<svg class="a" style="left:82px;top:282px" width="80" height="5" viewBox="0 0 80 5"><path d="M1.0 3.6L3.6 0.8M7.0 3.6L9.6 0.8M13.0 3.6L15.6 0.8M19.0 3.6L21.6 0.8M25.0 3.6L27.6 0.8M31.0 3.6L33.6 0.8M37.0 3.6L39.6 0.8M43.0 3.6L45.6 0.8M49.0 3.6L51.6 0.8M55.0 3.6L57.6 0.8M61.0 3.6L63.6 0.8M67.0 3.6L69.6 0.8M73.0 3.6L75.6 0.8" stroke="#6f8fba" stroke-width="1.7"/></svg>

<div class="a" style="left:76px;top:291px;width:91px;height:20px;background:#f0f0f0"></div>
<svg class="a" style="left:79px;top:295px" width="17" height="12" viewBox="0 0 17 12"><path d="M0.8 6Q8.5 -2 16.2 6Q8.5 14 0.8 6z" fill="none" stroke="#999" stroke-width="1"/><circle cx="8.5" cy="6" r="2.3" fill="none" stroke="#999" stroke-width="1"/><path d="M3 0.5L13.5 11.5" stroke="#888" stroke-width="1"/></svg>
<svg class="a" style="left:104px;top:293px" width="16" height="16" viewBox="0 0 16 16"><defs><linearGradient id="cg" x1="0" y1="0" x2="1" y2="0"><stop offset="0" stop-color="#fff"/><stop offset=".5" stop-color="#c9ced6"/><stop offset="1" stop-color="#f4f4f4"/></linearGradient></defs><rect x="1" y="0.8" width="14" height="14.4" rx="3.5" fill="url(#cg)" stroke="#333" stroke-width="1.1"/><path d="M2 4.8Q8 7 14 4.8" fill="none" stroke="#fff" stroke-width="1.2"/></svg>
<div class="a" style="left:134px;top:294px;font-size:11px;line-height:14px;color:#333">Barb</div>

<div class="a" style="left:76px;top:315px;width:25px;height:20px;background:#f0f0f0"></div>
<div class="a" style="left:101px;top:315px;width:70px;height:20px;background:#0696d7"></div>
<svg class="a" style="left:79px;top:320px" width="17" height="10" viewBox="0 0 17 10"><path d="M0.5 5Q8.5 -3 16.5 5Q8.5 13 0.5 5z" fill="#8c8c8c"/><circle cx="8.5" cy="5" r="2.6" fill="none" stroke="#d8d8d8" stroke-width="1.2"/></svg>
<svg class="a" style="left:104px;top:317px" width="16" height="16" viewBox="0 0 16 16"><rect x="1" y="0.8" width="14" height="14.4" rx="3.5" fill="url(#cg)" stroke="#333" stroke-width="1.1"/><path d="M2 4.8Q8 7 14 4.8" fill="none" stroke="#fff" stroke-width="1.2"/></svg>
<div class="a" style="left:134px;top:318px;font-size:11px;line-height:14px;font-weight:bold;color:#fff;letter-spacing:0.6px">Male</div>

<!-- banner -->
<div class="a" style="left:753px;top:141px;width:415px;height:23px;background:#f0f0f0"></div>
<div class="a" style="left:1032px;top:142px;width:1px;height:22px;background:#d2d2d2"></div>
<svg class="a" style="left:758px;top:145px" width="12" height="15" viewBox="0 0 12 15"><path d="M3 6.5V4.2Q3 1.2 6 1.2T9 4.2V6.5" fill="none" stroke="#e02020" stroke-width="1.9"/><rect x="0" y="6" width="12" height="9" rx="1" fill="#e02020"/><rect x="5.2" y="8.5" width="1.6" height="3.5" fill="#f8d0d0"/></svg>
<div class="a" style="left:778px;top:147px;font-size:11px;line-height:14px;font-weight:bold;color:#333">Read-Only:</div>
<div class="a" style="left:858px;top:147px;font-size:11px;line-height:14px;color:#333;letter-spacing:-0.13px">Document limit has been reached</div>
<div class="a" style="left:1046px;top:147px;font-size:11px;line-height:14px;color:#0a77c0;letter-spacing:-0.2px">My Editable Documents</div>

<!-- cylinder -->
<svg class="a" style="left:0;top:0" width="1920" height="1080" viewBox="0 0 1920 1080">
 <defs>
  <linearGradient id="side" x1="886" y1="0" x2="1122" y2="0" gradientUnits="userSpaceOnUse">
   <stop offset="0" stop-color="#3866ad"/><stop offset="0.05" stop-color="#3d6cb5"/><stop offset="0.16" stop-color="#4a7ac5"/><stop offset="0.3" stop-color="#4575bf"/>
   <stop offset="0.55" stop-color="#3e6db8"/><stop offset="0.72" stop-color="#3263ad"/><stop offset="0.8" stop-color="#2e5ea7"/><stop offset="0.92" stop-color="#3565ae"/><stop offset="1" stop-color="#3060a8"/>
  </linearGradient>
 </defs>
 <path d="M886 445.5V666.6A118 41.3 0 0 0 1122 666.6V445.5z" fill="url(#side)"/>
 <ellipse cx="1004" cy="445.5" rx="118" ry="41" fill="#4677c1"/>
 <path d="M886 666.6A118 41.3 0 0 1 1122 666.6" fill="none" stroke="#27508f" stroke-width="0.9" stroke-dasharray="6 2.5" opacity="0.8"/>
 <ellipse cx="1004" cy="445.5" rx="118" ry="41" fill="none" stroke="#1e3f78" stroke-width="1.1"/>
 <path d="M886 666.6A118 41.3 0 0 0 1122 666.6" fill="none" stroke="#1b3c74" stroke-width="1.2"/><path d="M886.4 445.5V666.6M1121.6 445.5V666.6" fill="none" stroke="#2f5a9c" stroke-width="0.8"/>
</svg>

<!-- view cube -->
<svg class="a" style="left:1800px;top:150px" width="110" height="110" viewBox="0 0 110 110">
 <defs>
  <linearGradient id="vcf" x1="0" y1="0" x2="0" y2="1"><stop offset="0" stop-color="#f6f6f6"/><stop offset="1" stop-color="#dedede"/></linearGradient>
  <radialGradient id="vcs" cx="0.5" cy="0.5" r="0.5"><stop offset="0" stop-color="#000" stop-opacity=".16"/><stop offset="1" stop-color="#000" stop-opacity="0"/></radialGradient>
  <filter id="vb" x="-10%" y="-10%" width="120%" height="120%"><feGaussianBlur stdDeviation="0.35"/></filter>
 </defs>
 <ellipse cx="57" cy="82" rx="40" ry="14" fill="url(#vcs)"/>
 <path d="M22.5 27.1L57.5 37.1V87.5L23.3 72.1z" fill="url(#vcf)" opacity=".72"/>
 <path d="M57.5 37.1L90.4 27.5L88.3 71.7L57.5 87.5z" fill="url(#vcf)" opacity=".72"/>
 <path d="M22.5 27.1L55 20.8L90.4 27.5L57.5 37.1z" fill="#f6f6f6" opacity=".75"/>
 <g filter="url(#vb)">
 <path d="M57.5 37.1V87.5" fill="none" stroke="#555" stroke-width="0.9" stroke-dasharray="3.5 2"/>
 <path d="M22.5 27.1L57.5 37.1L90.4 27.5M90.4 27.5L88.3 71.7L57.5 87.5" fill="none" stroke="#777" stroke-width="0.8" stroke-dasharray="3.5 2.2"/>
 <path d="M22.5 27.1L55 20.8L90.4 27.5" fill="none" stroke="#888" stroke-width="0.7" stroke-dasharray="3 2.5"/>
 <text x="0" y="0" font-family="Liberation Sans" font-size="10.5" fill="#6c7076" transform="translate(28 55.5) rotate(23) scale(0.78 1.08)">FRONT</text>
 <text x="0" y="0" font-family="Liberation Sans" font-size="10.5" fill="#6c7076" transform="translate(65 65) rotate(-25) scale(0.76 1.1)">RIGHT</text>
 <path d="M20.8 20L23.3 72.1" stroke="#5a5af2" stroke-width="2.2"/><path d="M23.3 72.1L64.2 92.5" stroke="#ec8282" stroke-width="2.6"/>
 <text x="16" y="18" font-family="Liberation Sans" font-size="11" font-weight="bold" fill="#7c7cf6">Z</text>
 <text x="66.2" y="100" font-family="Liberation Sans" font-size="12" fill="#f08080">X</text>
 </g>
</svg>

<!-- nav bar -->
<div class="a" style="left:841px;top:954px;width:237px;height:24px;background:#f0f0f0"></div>
<svg class="a" style="left:841px;top:954px" width="237" height="24" viewBox="841 954 237 24">
 <defs><linearGradient id="mg" x1="0" y1="0" x2="0" y2="1"><stop offset="0" stop-color="#f4fbfd"/><stop offset="1" stop-color="#c8dde4"/></linearGradient></defs>
 <path d="M844.5 966.5Q850 963.5 859 965.5Q862 967.5 858 969Q853 970.5 847.5 969.5" fill="none" stroke="#333" stroke-width="1"/>
 <path d="M846 969.5L849.5 967.2V971.8z" fill="#222"/>
 <path d="M851.2 973.5V961.5H849.8L852.5 958.2L855.2 961.5H853.8V973.5z" fill="#fff" stroke="#333" stroke-width="0.9"/>
 <path d="M849.5 969.4H856" stroke="#333" stroke-width="0.9"/>
 <path d="M865 964.5h6l-3 3.5z" fill="#222"/>
 <path d="M878 963Q880 959.5 882 958.3L883 961L887 960L889.3 959.3L889.8 962.5" fill="#c9ced6" stroke="#333" stroke-width="0.8"/>
 <rect x="877.7" y="963.2" width="15" height="10.2" rx="1" fill="#fff" stroke="#333" stroke-width="1.2"/>
 <rect x="880.6" y="966.2" width="9.2" height="4.2" fill="#c2c8d4" stroke="#333" stroke-width="1"/>
 <path d="M906.5 973.5L902.8 966.8Q902.3 965.5 903.6 965.4Q904.6 965.4 905.5 966.8L906.2 967.5V960.2Q906.2 958.8 907.3 958.8Q908.4 958.8 908.4 960.2V964.6V958.3Q908.5 957.3 909.6 957.3Q910.7 957.3 910.7 958.3V964.5V959Q910.8 958 911.9 958Q913 958 913 959V965V960.8Q913.2 960 914.2 960Q915.3 960 915.3 961V966.5Q915.3 971 913.5 973.5z" fill="#eceef2" stroke="#333" stroke-width="0.9" stroke-linejoin="round"/>
 <circle cx="933.8" cy="964.8" r="4.4" fill="url(#mg)" stroke="#333" stroke-width="1.2"/>
 <path d="M937.2 968.3L940.6 971.7" stroke="#333" stroke-width="2.2" stroke-linecap="round"/>
 <path d="M940 962.3H945M942.5 958.3V962.3M940 964.8H945" stroke="#333" stroke-width="0.9"/>
 <path d="M955.5 958.5H957M967.5 958.5H970.5V961M970.5 964.5V967M955.5 958.5V961M955.5 964.5V967M955.5 970V973.5H958M960.5 973.5H962.5M965 973.5H966.5" fill="none" stroke="#333" stroke-width="0.9"/>
 <circle cx="961.3" cy="964.5" r="5.3" fill="url(#mg)" stroke="#333" stroke-width="1.2"/>
 <path d="M965.2 968.4L969.6 972.6" stroke="#333" stroke-width="2.4" stroke-linecap="round"/>
 <path d="M976 964.5h6l-3 3.5z" fill="#222"/>
 <rect x="988.4" y="958.4" width="15.2" height="12.3" rx="1.2" fill="#fafafa" stroke="#444" stroke-width="1"/>
 <rect x="990.4" y="960.3" width="11.2" height="8.4" rx="1" fill="#a4c0e2" stroke="#1f3c70" stroke-width="1"/>
 <path d="M993 971V972Q992.5 973.5 993.5 973.5H999Q999.8 973.5 999 972V971" fill="#fff" stroke="#333" stroke-width="0.9"/>
 <path d="M1006 964.5h6l-3 3.5z" fill="#222"/>
 <defs><linearGradient id="gg" x1="0" y1="0" x2="0" y2="1"><stop offset="0" stop-color="#777"/><stop offset="1" stop-color="#8890a0"/></linearGradient></defs>
 <rect x="1019" y="958.2" width="15.6" height="15.6" rx="1.2" fill="url(#gg)"/>
 <g fill="#fff"><rect x="1020.2" y="959.3" width="2" height="2"/><rect x="1023.2" y="959.3" width="2" height="2"/><rect x="1026.2" y="959.3" width="2" height="2"/><rect x="1029.2" y="959.3" width="2" height="2"/><rect x="1032.2" y="959.3" width="1.6" height="2"/>
 <rect x="1020.2" y="962.3" width="2" height="2"/><rect x="1023.2" y="962.3" width="2" height="2"/><rect x="1026.2" y="962.3" width="2" height="2"/><rect x="1029.2" y="962.3" width="2" height="2"/><rect x="1032.2" y="962.3" width="1.6" height="2"/>
 <rect x="1020.2" y="965.3" width="2" height="2"/><rect x="1023.2" y="965.3" width="2" height="2"/><rect x="1026.2" y="965.3" width="2" height="2"/><rect x="1029.2" y="965.3" width="2" height="2"/><rect x="1032.2" y="965.3" width="1.6" height="2"/>
 <rect x="1020.2" y="968.3" width="2" height="2"/><rect x="1023.2" y="968.3" width="2" height="2"/><rect x="1026.2" y="968.3" width="2" height="2"/><rect x="1029.2" y="968.3" width="2" height="2"/><rect x="1032.2" y="968.3" width="1.6" height="2"/>
 <rect x="1020.2" y="971.3" width="2" height="1.6"/><rect x="1023.2" y="971.3" width="2" height="1.6"/><rect x="1026.2" y="971.3" width="2" height="1.6"/><rect x="1029.2" y="971.3" width="2" height="1.6"/><rect x="1032.2" y="971.3" width="1.6" height="1.6"/></g>
 <path d="M1037 964.5h6l-3 3.5z" fill="#222"/>
 <g fill="#bcd3ef" stroke="#1f3c70" stroke-width="1.1"><rect x="1050.5" y="959.5" width="7" height="6" rx="1"/><rect x="1058" y="959.5" width="7" height="6" rx="1"/><rect x="1050.5" y="966" width="7" height="6" rx="1"/><rect x="1058" y="966" width="7" height="6" rx="1"/></g>
 <g fill="#8fb0d8"><rect x="1052.5" y="961.5" width="3" height="2"/><rect x="1060" y="961.5" width="3" height="2"/><rect x="1052.5" y="968" width="3" height="2"/><rect x="1060" y="968" width="3" height="2"/></g>
 <path d="M1068 964.5h6l-3 3.5z" fill="#222"/>
</svg>
<div class="a" style="left:1867px;top:960px;font-size:11.5px;line-height:14px;color:#2a2a2a;font-weight:bold;letter-spacing:-0.25px">Body6</div>

<!-- comments -->
<div class="a" style="left:4px;top:953px;width:300px;height:25px;background:#f2f2f2;border:1px solid #c9c9c9;border-top-color:#e4e4e4"></div>
<div class="a tl" style="left:29px;top:959px;color:#555;letter-spacing:-0.8px">COMMENTS</div>
<svg class="a" style="left:282px;top:960px" width="11" height="11" viewBox="0 0 11 11"><circle cx="5.5" cy="5.5" r="5" fill="#222"/><path d="M2.5 5.5h6M5.5 2.5v6" stroke="#fff" stroke-width="1.6"/></svg>
<div class="a" style="left:299px;top:960px;width:1px;height:11px;background:#555"></div><div class="a" style="left:301px;top:962px;width:1px;height:7px;background:#555"></div>

<div id="timeline" class="a" style="border-top:1px solid #c8c8c8"></div>
<!-- timeline controls -->
<svg class="a" style="left:10px;top:999px" width="116" height="17" viewBox="0 0 116 17" fill="#444">
 <rect x="1" y="1.5" width="2.2" height="14"/><path d="M13.5 1.5V15.5L4 8.5z"/>
 <path d="M35 1.5V15.5L25.5 8.5z"/><rect x="35.5" y="5" width="2.5" height="7"/>
 <path d="M51 1.5V15.5L63 8.5z"/>
 <rect x="75" y="5" width="2.5" height="7"/><path d="M78 1.5V15.5L87.5 8.5z"/>
 <path d="M100.5 1.5V15.5L110 8.5z"/><rect x="110.8" y="1.5" width="2.2" height="14"/>
</svg>
<svg class="a" style="left:140px;top:988px" width="230" height="40" viewBox="140 988 230 40">
 <defs>
  <g id="tcyl"><path d="M-8 3.2V13.5Q0 17.5 8 13.5V3.2z" fill="#5ea8e2"/><ellipse cx="0" cy="3.2" rx="8" ry="3" fill="#8ccaf5"/></g>
  <g id="text"><path d="M-8 2.5L-6 0H4L2 2.5z" fill="#8ecaf5"/><path d="M-8 2.5H2V13H-8z" fill="#66abe2"/><path d="M2 2.5L4 0V11L2 13z" fill="#3f8bcb"/><path d="M-8 13H2L4 11V13L2 15H-8z" fill="#c4c4c4"/><path d="M6.5 14V1.5" stroke="#222" stroke-width="1"/><path d="M5.2 3.2L6.5 0L7.8 3.2z" fill="#222"/></g>
  <g id="tfil"><path d="M-8 11V4L-5.5 1L-1 -0.2H2Q8 -0.2 8 6V15.5H-5L-8 12.5z" fill="#dcdcdc" stroke="#444" stroke-width="0.9"/><path d="M-8 5.5L-1.5 0L2 3.8L-5 9.5z" fill="#5aa4dc"/></g>
 </defs>
 <use href="#tcyl" x="154" y="999"/><use href="#tcyl" x="178" y="999"/>
 <use href="#text" x="202" y="999.5"/><use href="#text" x="226" y="999.5"/>
 <use href="#tfil" x="250" y="999.3"/><use href="#tfil" x="274" y="999.3"/><use href="#tfil" x="298" y="999.3"/>
 <path d="M314 1007L316 1005H320V1001L322 999H330V1008L328 1010H324V1013L322 1015H314z" fill="#66abe2"/><path d="M320 1001L322 999H330L328 1001z M314 1007L316 1005H320L318 1007z" fill="#8ecaf5"/><path d="M328 1001L330 999V1008L328 1010z M322 1010L324 1010V1013L322 1015z" fill="#3f8bcb"/>
 <use href="#tcyl" x="346" y="999"/>
 <path d="M154 1018V1023.3H346V1018M178 1018V1023.3M202 1018V1023.3M226 1018V1023.3M250 1018V1023.3M274 1018V1023.3M298 1018V1023.3M322 1018V1023.3" fill="none" stroke="#c6c6c6" stroke-width="1.4"/>
 <path d="M352 993H364V996L359.5 1001V1024.5H356.5V1001L352 996z" fill="#555"/>
 <path d="M338.5 994.5L341.5 990.5M343 994.5L346 990.5M347.5 994.5L350.5 990.5" stroke="#444" stroke-width="1.6"/>
</svg>
<svg class="a" style="left:1890px;top:999px" width="17" height="17" viewBox="0 0 16 16"><path d="M6.6 0.5h2.8l.4 2.1 1.5.6 1.8-1.2 2 2-1.2 1.8.6 1.5 2.1.4v2.8l-2.1.4-.6 1.5 1.2 1.8-2 2-1.8-1.2-1.5.6-.4 2.1H6.6l-.4-2.1-1.5-.6-1.8 1.2-2-2 1.2-1.8-.6-1.5L.5 9.4V6.6l2.1-.4.6-1.5L2 2.9l2-2 1.8 1.2 1.5-.6z" fill="#8a8a8a"/><circle cx="8" cy="8" r="2.6" fill="#f2f2f2"/></svg>

<div id="taskbar" class="a"></div>
<svg class="a" style="left:0;top:1032px" width="1920" height="48" viewBox="0 1032 1920 48">
 <defs>
  <linearGradient id="win" x1="0" y1="0" x2="1" y2="1"><stop offset="0" stop-color="#6ce0fb"/><stop offset="1" stop-color="#1a98e6"/></linearGradient>
  <linearGradient id="fol" x1="0" y1="0" x2="0" y2="1"><stop offset="0" stop-color="#ffe27a"/><stop offset="1" stop-color="#f5b82a"/></linearGradient>
  <linearGradient id="fus" x1="0" y1="0" x2="1" y2="1"><stop offset="0" stop-color="#fbe4c8"/><stop offset="1" stop-color="#f2c28f"/></linearGradient>
 </defs>
 <!-- start -->
 <rect x="597" y="1045" width="11.2" height="11" fill="url(#win)"/><rect x="609" y="1045" width="11.2" height="11" fill="url(#win)"/><rect x="597" y="1057" width="11.2" height="11" fill="url(#win)"/><rect x="609" y="1057" width="11.2" height="11" fill="url(#win)"/>
 <!-- search -->
 <circle cx="654.5" cy="1053.5" r="7.3" fill="#2e2e2e" stroke="#e8e8e8" stroke-width="2"/><path d="M649.5 1059L644 1065" stroke="#e8e8e8" stroke-width="2.3" stroke-linecap="round"/>
 <!-- task view -->
 <rect x="685" y="1050" width="18" height="17" rx="1.5" fill="#7a7a7a"/><rect x="691" y="1045" width="18" height="16" rx="1.5" fill="#f2f2f2"/><rect x="691" y="1050" width="12" height="11" fill="#bdbdbd"/>
 <!-- widgets -->
 <rect x="729" y="1045" width="24" height="23" rx="1.5" fill="#1a6fd0"/><rect x="731" y="1047" width="8" height="19" rx="1" fill="#fff"/><rect x="741" y="1047" width="10" height="9" fill="#7ad3ff"/><rect x="741" y="1057" width="10" height="3.8" fill="#3aa8f5"/><rect x="741" y="1061.5" width="10" height="4.5" fill="#2a8ef0"/>
 <!-- chat -->
 <path d="M784.5 1045A11.5 11.5 0 1 1 776 1064.5L773 1067.5L774.5 1062A11.5 11.5 0 0 1 784.5 1045z" fill="#7b6fd6"/><rect x="778" y="1051.5" width="10" height="9" rx="1.5" fill="#fff"/><path d="M788 1056L792 1053V1059z" fill="#fff"/>
 <!-- explorer -->
 <path d="M817 1047Q817 1045 819 1045H826L829 1048H839Q841 1048 841 1050V1066Q841 1068 839 1068H819Q817 1068 817 1066z" fill="url(#fol)"/><path d="M817 1048H826L828 1050H817z" fill="#e0a31c"/><rect x="823" y="1061" width="12" height="6" rx="1.5" fill="#1a7fd8"/>
 <rect x="826" y="1072" width="6" height="3" rx="1.5" fill="#9a9a9a"/>
 <!-- whatsapp -->
 <circle cx="873" cy="1056" r="10.5" fill="#fff"/><circle cx="873" cy="1056" r="8.8" fill="#2bb741"/><path d="M864.5 1066L866 1061.5L869 1064z" fill="#fff"/><path d="M869.5 1052Q870 1050 871.5 1050.5L872.5 1053L871.5 1054Q873 1057 876 1058L877 1057L879.5 1058Q879.5 1060 878 1060.5Q871 1060 869.5 1052z" fill="#fff"/>
 <circle cx="881.5" cy="1046.5" r="7.5" fill="#e81123"/><text x="881.5" y="1051" font-family="Liberation Sans" font-size="11" fill="#fff" text-anchor="middle">1</text>
 <rect x="869" y="1072" width="6" height="3" rx="1.5" fill="#9a9a9a"/>
 <!-- edge -->
 <defs><linearGradient id="edg" x1="0" y1="0.2" x2="1" y2="0.6"><stop offset="0" stop-color="#1aa0e6"/><stop offset="0.55" stop-color="#26b6d8"/><stop offset="1" stop-color="#5ad46a"/></linearGradient></defs>
 <circle cx="917" cy="1056" r="12" fill="url(#edg)"/>
 <path d="M905 1056Q905 1066 914 1068Q921 1069 926 1063Q922 1065 918 1064Q911 1062 912 1056Q913 1051 919 1051Q915 1049 910 1050Q905 1052 905 1056z" fill="#0f5db8"/>
 <path d="M912.5 1058Q912 1052 917.5 1051.5Q922.5 1051.5 923 1055.5Q919 1054 916 1055.5Q914 1057 915 1060Q913 1060 912.5 1058z" fill="#1c1c1c" opacity=".85"/>
 <!-- terminal -->
 <rect x="949" y="1046" width="23" height="18" rx="1" fill="#000" stroke="#8a8a8a" stroke-width="1.2"/><rect x="949.5" y="1046.5" width="22" height="3" fill="#666"/><text x="951.5" y="1056" font-family="Liberation Mono" font-size="6" fill="#ddd">C:\</text><rect x="959" y="1056" width="8" height="1" fill="#ddd"/>
 <!-- xampp -->
 <rect x="993" y="1044" width="24" height="24" rx="2.5" fill="#f27b21"/><rect x="993" y="1044" width="24" height="4" rx="2" fill="#f6994a" opacity=".6"/>
 <path d="M999.5 1049.5Q1003 1048.5 1004 1051H1006Q1007 1048.5 1010.5 1049.5Q1013.5 1051 1012 1054.5Q1011.5 1056 1012 1057.5Q1013.5 1061 1010.5 1062.5Q1007 1063.5 1006 1061H1004Q1003 1063.5 999.5 1062.5Q996.5 1061 998 1057.5Q998.5 1056 998 1054.5Q996.5 1051 999.5 1049.5z" fill="none" stroke="#fff" stroke-width="2.6" stroke-linejoin="round"/>
 <!-- chrome -->
 <circle cx="1048.5" cy="1056" r="11.5" fill="#dd4b39"/><path d="M1048.5 1056L1038.5 1050.3A11.5 11.5 0 0 0 1042.8 1066z" fill="#1e9e4c"/><path d="M1048.5 1056L1042.8 1066A11.5 11.5 0 0 0 1060 1056z" fill="#fbc02d"/><path d="M1048.5 1056L1060 1056A11.5 11.5 0 0 0 1058.5 1050.3H1048.5z" fill="#fbc02d"/><circle cx="1048.5" cy="1056" r="5.2" fill="#fff"/><circle cx="1048.5" cy="1056" r="4" fill="#3b7ce6"/>
 <rect x="1045.5" y="1072" width="6" height="3" rx="1.5" fill="#9a9a9a"/>
 <!-- atom -->
 <circle cx="1093" cy="1056" r="12" fill="#3fae6a"/><g fill="none" stroke="#e8f6ec" stroke-width="1.1"><ellipse cx="1093" cy="1056" rx="8.5" ry="3.3"/><ellipse cx="1093" cy="1056" rx="8.5" ry="3.3" transform="rotate(60 1093 1056)"/><ellipse cx="1093" cy="1056" rx="8.5" ry="3.3" transform="rotate(-60 1093 1056)"/></g>
 <!-- box -->
 <path d="M1125.5 1050L1137 1044.5L1148.5 1050V1062.5L1137 1068.5L1125.5 1062.5z" fill="#2d6fe0"/>
 <path d="M1137 1056L1148.5 1050V1062.5L1137 1068.5z" fill="#4a8af5"/>
 <path d="M1125.5 1050L1137 1044.5L1148.5 1050L1137 1056z" fill="#2a5cb8"/>
 <path d="M1131.2 1047.2L1137 1050.2L1142.8 1047.2L1137 1044.5z" fill="#2a5cb8"/>
 <path d="M1131.2 1053V1059L1137 1062V1056z" fill="#f29a3a"/><path d="M1137 1056V1062L1142.8 1059V1053z" fill="#f6b050"/><path d="M1131.2 1053L1137 1050L1142.8 1053L1137 1056z" fill="#f8b860"/>
 <g stroke="#1b3f8a" stroke-width="0.7" fill="none"><path d="M1125.5 1056.3L1137 1062.2L1148.5 1056.3M1131.2 1047.2V1065.5M1142.8 1047.2V1065.5M1137 1056V1068.5M1125.5 1050L1137 1056L1148.5 1050"/></g>
 <!-- slack -->
 <circle cx="1181" cy="1056" r="11.3" fill="#fff"/><g stroke-linecap="round" stroke-width="3"><path d="M1178.5 1049V1053" stroke="#36c5f0"/><path d="M1174 1053.5H1178" stroke="#36c5f0"/><path d="M1183.5 1048.5V1053" stroke="#2eb67d"/><path d="M1184 1053.5H1188" stroke="#2eb67d"/><path d="M1183.5 1059V1063" stroke="#ecb22e"/><path d="M1184 1058.5H1188" stroke="#ecb22e"/><path d="M1178.5 1059V1063" stroke="#e01e5a"/><path d="M1174 1058.5H1178" stroke="#e01e5a"/></g>
 <!-- inkscape -->
 <path d="M1224 1045L1235 1058Q1235 1061 1231 1060L1228 1064Q1226 1066 1224 1063L1221 1061Q1216 1062 1213.5 1058z" fill="#111" stroke="#cfcfcf" stroke-width="0.9"/><path d="M1220 1050L1224 1046L1228 1050Q1224 1053 1220 1050z" fill="#fff"/>
 <!-- fusion active -->
 <rect x="1249" y="1036" width="35" height="40" rx="4" fill="#2d2d2d"/><path d="M1282 1036H1286Q1290 1036 1290 1040V1072Q1290 1076 1286 1076H1282z" fill="#292929"/>
 <rect x="1257" y="1044" width="24" height="24" fill="url(#fus)"/><path d="M1264 1049Q1264 1046.5 1266.5 1046.5H1273.5Q1275 1046.5 1275 1048V1049.5Q1275 1051 1273.5 1051H1268.5V1054H1272.5Q1274 1054 1274 1055.5V1056.5Q1274 1058 1272.5 1058H1268.5V1063Q1268.5 1065 1266.5 1065H1265.5Q1264 1065 1264 1063z" fill="#e08a2e"/><path d="M1264.5 1063V1049Q1266 1048 1267 1050L1268 1063z" fill="#b05a18" opacity=".55"/><rect x="1272" y="1064" width="5" height="2" fill="#f0b070"/>
 <rect x="1261" y="1072" width="16" height="3" rx="1.5" fill="#4cc2ff"/>
 <!-- settings -->
 <g transform="translate(1313 1056)"><path d="M-3 -12H3L4 -8.6L7.5 -10.2L10.9 -6.2L8.6 -3.2L12 -1.6V1.6L8.6 3.2L10.9 6.2L7.5 10.2L4 8.6L3 12H-3L-4 8.6L-7.5 10.2L-10.9 6.2L-8.6 3.2L-12 1.6V-1.6L-8.6 -3.2L-10.9 -6.2L-7.5 -10.2L-4 -8.6z" fill="#8a929c"/><circle r="5.6" fill="#e8eef5"/><circle r="4.2" fill="#1c6fd0"/></g>
 <rect x="1309" y="1072" width="6" height="3" rx="1.5" fill="#9a9a9a"/>
 <!-- tray -->
 <path d="M1640.5 1059L1646 1053L1651.5 1059" fill="none" stroke="#fff" stroke-width="1.2"/>
 <path d="M1671 1056Q1671 1049 1678 1049Q1683 1049 1684.5 1052M1684.5 1048.5V1052.5H1680.5" fill="none" stroke="#fff" stroke-width="1.1"/><path d="M1671 1060.5L1673 1063.5L1676 1062" fill="none" stroke="#fff" stroke-width="1.1"/>
 <circle cx="1682.2" cy="1060" r="3.8" fill="#f7a60e"/>
 <text x="1716" y="1053" font-family="Liberation Sans" font-size="11.5" fill="#fff" text-anchor="middle">ENG</text>
 <text x="1716" y="1068.5" font-family="Liberation Sans" font-size="11.5" fill="#fff" text-anchor="middle">US</text>
 <g fill="none" stroke="#fff" stroke-width="1.3"><path d="M1746 1053Q1754 1045 1762 1053"/><path d="M1748.5 1055.5Q1754 1050 1759.5 1055.5"/><path d="M1751 1058Q1754 1055 1757 1058"/></g><circle cx="1754" cy="1060.5" r="1.3" fill="#fff"/>
 <path d="M1770 1053H1773L1777 1049.5V1062.5L1773 1059H1770z" fill="none" stroke="#fff" stroke-width="1.1"/><path d="M1779.5 1053Q1781 1056 1779.5 1059M1782 1051Q1785 1056 1782 1061" fill="none" stroke="#fff" stroke-width="1.1"/><path d="M1784.5 1049.5Q1788 1056 1784.5 1062.5" fill="none" stroke="#888" stroke-width="1"/>
 <rect x="1797" y="1052" width="12" height="8.5" rx="1" fill="none" stroke="#fff" stroke-width="1.1"/><rect x="1809" y="1054.5" width="1.5" height="3.5" fill="#fff"/><rect x="1799" y="1054" width="6" height="4.5" fill="#fff"/><path d="M1794.5 1049.5V1052M1796.5 1049.5V1052M1793.5 1052H1797.5V1054Q1795.5 1056 1795.5 1058V1061" fill="none" stroke="#fff" stroke-width="1"/>
 <text x="1876" y="1052" font-family="Liberation Sans" font-size="11.5" fill="#fff" text-anchor="end">7:46 PM</text>
 <text x="1876" y="1068" font-family="Liberation Sans" font-size="11.5" fill="#fff" text-anchor="end">2/11/2022</text>
 <circle cx="1892" cy="1056" r="7.8" fill="#4cc2ff"/><text x="1892" y="1060" font-family="Liberation Sans" font-size="10.5" fill="#111" text-anchor="middle">7</text>
</svg>

</body></html>
